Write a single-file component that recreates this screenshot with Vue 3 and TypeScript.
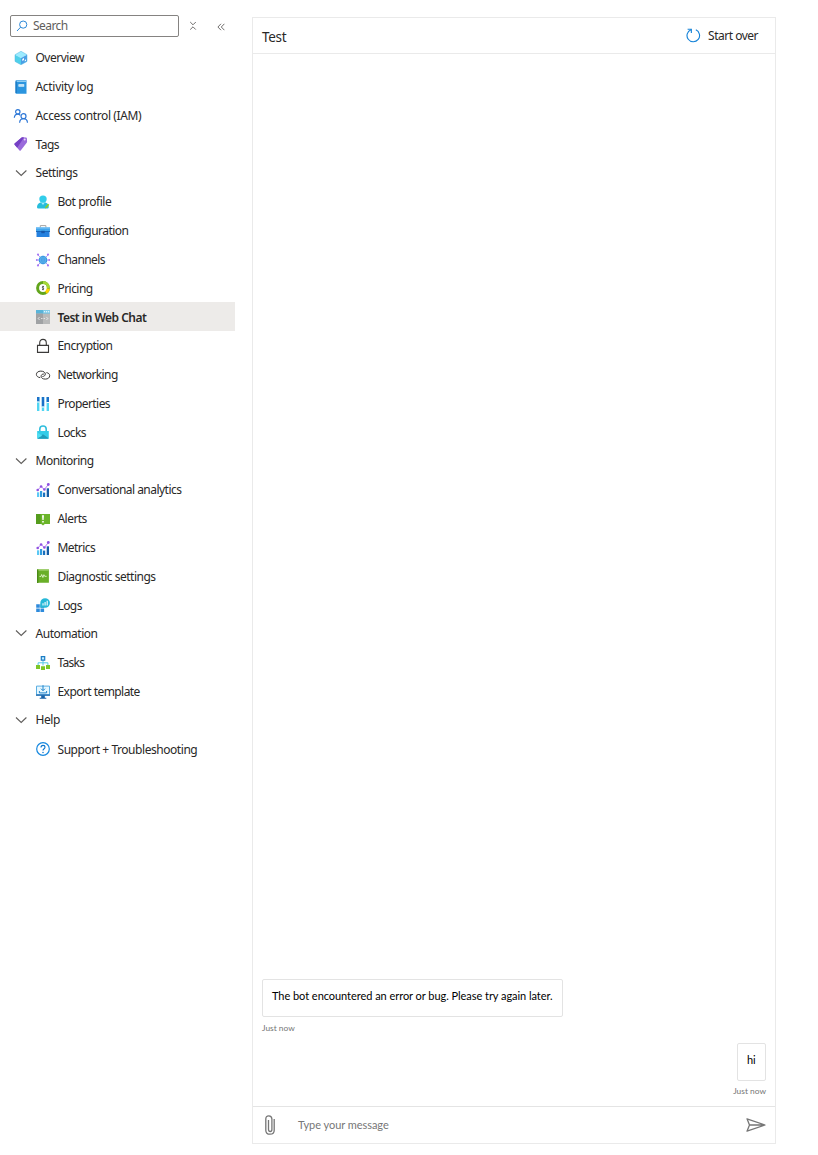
<script setup lang="ts">
interface NavItem {
  label: string
  icon: string
  kind: 'root' | 'group' | 'child'
  active?: boolean
  spacing: number
}

const items: NavItem[] = [
  { label: 'Overview', icon: 'cube', kind: 'root', spacing: -0.5 },
  { label: 'Activity log', icon: 'book', kind: 'root', spacing: -0.3 },
  { label: 'Access control (IAM)', icon: 'people', kind: 'root', spacing: -0.38 },
  { label: 'Tags', icon: 'tag', kind: 'root', spacing: -0.5 },
  { label: 'Settings', icon: 'chevron', kind: 'group', spacing: -0.45 },
  { label: 'Bot profile', icon: 'profile', kind: 'child', spacing: -0.47 },
  { label: 'Configuration', icon: 'toolbox', kind: 'child', spacing: -0.53 },
  { label: 'Channels', icon: 'channels', kind: 'child', spacing: -0.6 },
  { label: 'Pricing', icon: 'pricing', kind: 'child', spacing: -0.55 },
  { label: 'Test in Web Chat', icon: 'webchat', kind: 'child', active: true, spacing: -0.52 },
  { label: 'Encryption', icon: 'padlock', kind: 'child', spacing: -0.55 },
  { label: 'Networking', icon: 'link', kind: 'child', spacing: -0.6 },
  { label: 'Properties', icon: 'properties', kind: 'child', spacing: -0.58 },
  { label: 'Locks', icon: 'lock', kind: 'child', spacing: -0.6 },
  { label: 'Monitoring', icon: 'chevron', kind: 'group', spacing: -0.5 },
  { label: 'Conversational analytics', icon: 'chart', kind: 'child', spacing: -0.53 },
  { label: 'Alerts', icon: 'alert', kind: 'child', spacing: -0.55 },
  { label: 'Metrics', icon: 'chart', kind: 'child', spacing: -0.55 },
  { label: 'Diagnostic settings', icon: 'diagnostic', kind: 'child', spacing: -0.5 },
  { label: 'Logs', icon: 'logs', kind: 'child', spacing: -0.6 },
  { label: 'Automation', icon: 'chevron', kind: 'group', spacing: -0.47 },
  { label: 'Tasks', icon: 'tasks', kind: 'child', spacing: -0.7 },
  { label: 'Export template', icon: 'export', kind: 'child', spacing: -0.56 },
  { label: 'Help', icon: 'chevron', kind: 'group', spacing: -0.4 },
  { label: 'Support + Troubleshooting', icon: 'help', kind: 'child', spacing: -0.45 },
]
</script>

<template>
  <div class="page">
    <aside class="sidebar">
      <div class="tools">
        <div class="search">
          <svg class="search-icon" viewBox="0 0 12 12" fill="none" stroke="#2b88d8">
            <circle cx="7.2" cy="4.6" r="3.6" />
            <path d="M4.6 7.2 1 11" />
          </svg>
          <span>Search</span>
        </div>
        <svg class="collapse" viewBox="0 0 8 10" fill="none" stroke="#605e5c" stroke-width=".9">
          <path d="M1.2 1 4 3.8 6.8 1M1.2 8.6 4 5.8l2.8 2.8" />
        </svg>
        <svg class="fold" viewBox="0 0 8 8" fill="none" stroke="#605e5c" stroke-width=".9">
          <path d="M4 .8.9 4 4 7.2M7.4.8 4.3 4l3.1 3.2" />
        </svg>
      </div>
      <nav>
        <div
          v-for="item in items"
          :key="item.label"
          class="row"
          :class="[item.kind, { active: item.active }]"
        >
          <svg class="icon" viewBox="0 0 14 14" fill="none">
            <g v-if="item.icon === 'cube'">
              <path d="M7 .3 13 3.7 7 7.1 1 3.7z" fill="#9cebff" />
              <path d="M1 3.7 7 7.1v6.7L1 10.4z" fill="#50d0ea" />
              <path d="M13 3.7 7 7.1v6.7l6-3.4z" fill="#4a9fe6" />
              <path d="m7 .3 6 3.4v6.7l-6 3.4-6-3.4V3.7z" stroke="#50b7e0" stroke-width=".5" />
              <path d="m8.3 8.1 1.7-1v2l-1.7 1zM10.8 9l1.2-.7v1.5l-1.2.7z" fill="#fff" />
            </g>
            <g v-else-if="item.icon === 'book'">
              <path d="M1.5 1q0-.8.8-.8h10.2v13.6H2.3q-.8 0-.8-.8z" fill="#2b95df" />
              <path d="M2.6.8h10V2h-10z" fill="#8fcdf2" />
              <path d="M1.5 1.5h1.2V13H1.5z" fill="#1b74bd" />
              <path d="M4.5 4.3h5.7v2.3H4.5z" fill="#fff" />
              <path d="M5 5h4.8v.8H5z" fill="#addcf6" />
            </g>
            <g v-else-if="item.icon === 'people'" stroke="#2e78d7" stroke-width="1.2">
              <circle cx="3.8" cy="2.8" r="2.2" />
              <path d="M.3 8.8c.2-2.2 1.5-3.7 3.5-3.7 1 0 1.8.4 2.5 1.2" />
              <circle cx="9.5" cy="7.2" r="2.5" />
              <path d="M5.6 13.7c.2-2.4 1.7-4 3.9-4s3.8 1.6 4 4" />
            </g>
            <g v-else-if="item.icon === 'tag'">
              <path d="M.6 6.6 7.6.6q.4-.4 1-.4l3.4.3q.8.1.9.8l.2 3.4q0 .6-.4 1l-6 7.8q-.6.6-1.2 0L.6 7.8q-.5-.6 0-1.2z" fill="#9a6bdb" />
              <path d="M.6 6.6 7.6.6q.4-.4 1-.4l1.4.2L3.2 10.8.6 7.8q-.5-.6 0-1.2z" fill="#7540c4" />
              <circle cx="10.7" cy="2.6" r="1" fill="#e6d8fa" />
            </g>
            <path v-else-if="item.icon === 'chevron'" d="m2 4.5 5.2 5 5.2-5" stroke="#605e5c" stroke-width="1.1" />
            <g v-else-if="item.icon === 'profile'">
              <path d="M1 12.2C1.3 9 3 7.3 7 7.3s5.5 1.6 5.8 4.6q0 1.7-1.4 1.7h-9Q1 13.6 1 12.2z" fill="#27bddc" />
              <circle cx="7" cy="4.1" r="3.7" fill="#32cdea" />
              <path d="m5 7.5 2 2.6 2-2.6q-2 .7-4 0z" fill="#a8ecf7" />
              <path d="m9 13.6.6-2.2 2.4-2.6 1.3 1-2.4 2.9z" fill="#8fce20" />
            </g>
            <g v-else-if="item.icon === 'toolbox'">
              <path d="M4.3 3.8V1.6h5.6v2.2" stroke="#a7a5a3" stroke-width="1" />
              <path d="M0 3.4h14V8H0z" fill="#42a6ed" />
              <path d="M.5 7.4h13V13H.5z" fill="#2481df" />
              <path d="M0 3.4h14v1.2H0z" fill="#78c4f5" />
              <path d="M0 7.5h14" stroke="#155db0" stroke-width=".8" />
              <path d="M5.3 6.8h3.4v2.4H5.3z" fill="#1557aa" />
            </g>
            <g v-else-if="item.icon === 'channels'">
              <path d="M2 2 12 12M12 2 2 12M0 7h14" stroke="#a67af4" stroke-width=".8" />
              <circle cx="7" cy="7" r="4.3" fill="#248dde" />
              <path d="M2.8 7h8.4M7 2.8v8.4M3.5 5h7M3.5 9h7M5.4 3.2q-1.5 3.8 0 7.6M8.6 3.2q1.5 3.8 0 7.6" stroke="#a5dcfa" stroke-width=".4" />
              <g fill="#a67af4">
                <circle cx="2" cy="1.6" r="1.1" /><circle cx="12" cy="1.6" r="1.1" />
                <circle cx="2" cy="12.4" r="1.1" /><circle cx="12" cy="12.4" r="1.1" />
                <circle cx=".8" cy="7" r=".9" /><circle cx="13.2" cy="7" r=".9" />
              </g>
            </g>
            <g v-else-if="item.icon === 'pricing'">
              <circle cx="7" cy="7" r="5.4" stroke="#62a51c" stroke-width="3" />
              <path d="M7 1.6A5.4 5.4 0 0 1 12.4 7" stroke="#a4d638" stroke-width="3" />
              <path d="M12.4 7.5a5.4 5.4 0 0 1-2.6 4" stroke="#ffd400" stroke-width="3" />
              <path d="M8 5.6q-1.8-.5-1.8.5C6.2 7 7.9 7 7.9 8q-.1.9-1.9.4M7 4.8v4.4" stroke="#343b35" stroke-width=".7" />
            </g>
            <g v-else-if="item.icon === 'webchat'">
              <path d="M0 0h14v14H0z" fill="#b9baba" />
              <path d="M0 3.4h7V14H0z" fill="#a0a2a4" />
              <path d="M0 0h14v3.4H0z" fill="#59b4d9" />
              <path d="M7 0h7v3.4H7z" fill="#81cbe8" />
              <path d="M8 1.2h1.2v1H8zm2 0h1.2v1H10zm2 0h1.2v1H12z" fill="#fff" />
              <path d="m3.4 7.2-1.2 1.3 1.2 1.3M10.6 7.2l1.2 1.3-1.2 1.3M5.2 8.5h1.2M7.7 8.5h1.2" stroke="#eee" stroke-width="1" />
            </g>
            <g v-else-if="item.icon === 'padlock'" stroke="#3b3a39" stroke-width="1.1">
              <path d="M1.5 6.4h11v7h-11zM3.7 6.3V4q0-3.6 3.3-3.6T10.3 4v2.3" />
            </g>
            <g v-else-if="item.icon === 'link'" stroke="#3b3a39" stroke-width="1">
              <path d="M4.2 9.6C2 9.4.4 8.2.4 6.4c0-1.8 1.7-3.3 4.4-3.3s4.5 1.3 4.5 2.9S8 8.5 6.4 8.5" />
              <path d="M10.4 4.6c2.2.4 3.3 1.5 3.3 3.1 0 2-1.7 3.4-4.4 3.4S5.1 9.9 5.1 8.3c0-1.5 1.1-2.3 2.8-2.3" />
            </g>
            <g v-else-if="item.icon === 'properties'">
              <path d="M1 0h2.4v14H1zm4.8 0h2.4v14H5.8zm4.8 0H13v14h-2.4z" fill="#50d5f2" />
              <path d="M1 0h2.4v4.5H1zm4.8 0h2.4v9.5H5.8zm4.8 0H13v5h-2.4z" fill="#1c70c8" />
              <path d="M1 5h2.4M5.8 10h2.4M10.6 5.5H13" stroke="#fff" />
            </g>
            <g v-else-if="item.icon === 'lock'">
              <path d="M3.8 7V4q0-3 3.2-3t3.2 3v3" stroke="#32bedd" stroke-width="1.6" />
              <path d="M1.2 6h11.6v7q0 .8-.8.8H2q-.8 0-.8-.8z" fill="#34cce8" />
              <path d="m1.4 13.3 5.6-4 5.6 4-.6.5H2z" fill="#209cba" />
              <path d="m1.2 7.3 5 3.5-4.8 2.5z" fill="#50def2" />
            </g>
            <g v-else-if="item.icon === 'chart'">
              <path d="M1 9.3h2.2V14H1z" fill="#5bc8f5" />
              <path d="M4 8h2.2v6H4z" fill="#2f9bdf" />
              <path d="M7 9.6h2.2V14H7z" fill="#1a70bd" />
              <path d="M10.7 5.3H13V14h-2.3z" fill="#155ca5" />
              <path d="m1.7 7 3.4-3.5 3.3 3 4-5" stroke="#b37cf2" stroke-width="1" />
              <g fill="#9052e2">
                <circle cx="1.7" cy="7" r="1.3" /><circle cx="5.1" cy="3.5" r="1.3" />
                <circle cx="8.4" cy="6.5" r="1.3" /><circle cx="12.3" cy="1.5" r="1.4" />
              </g>
            </g>
            <g v-else-if="item.icon === 'alert'">
              <path d="M0 2h14v10H8.8L7 13.6 5.2 12H0z" fill="#6bb52a" />
              <path d="M0 2h4.5v10H0z" fill="#559c1d" />
              <path d="M6 3.2h2l-.4 4.8H6.4zM6.2 9h1.6v1.5H6.2z" fill="#fff" />
            </g>
            <g v-else-if="item.icon === 'diagnostic'">
              <path d="M1 .7Q1 .2 1.5.2h11.4v13.6H1.5q-.5 0-.5-.5z" fill="#69af28" />
              <path d="M1 .5h1.4V14H1z" fill="#4b8b17" />
              <path d="M2.4.5h10.3v1H2.4z" fill="#b5dc87" />
              <path d="M3.5 7.5h1.4l.8-2 1.2 3 1-2.8.8 1.6h2" stroke="#eefadf" stroke-width=".8" />
            </g>
            <g v-else-if="item.icon === 'logs'">
              <path d="M.2 6.3h3.6v3.4H.2zm0 4.1h3.6v3.5H.2zm4.3 0h3.6v3.5H4.5z" fill="#2e8bdc" />
              <path d="M4.5 6.3h3.6v3.4H4.5z" fill="#1768af" />
              <path d="M4.3 9.3V5A4.8 4.8 0 1 1 9.1 9.8H4.8q-.5 0-.5-.5z" fill="#27b8d8" />
              <path d="M7 5.2v2.2M9.1 4v3.4M11.2 2.8v4.6" stroke="#fff" stroke-width="1.1" />
            </g>
            <g v-else-if="item.icon === 'tasks'">
              <path d="M7 4.4v5M2.1 9V6.8h9.8V9" stroke="#54c8e6" stroke-width="1" />
              <path d="M5.3.6h3.4v3.5H5.3z" fill="#c5edff" stroke="#1b7cc4" stroke-width="1.2" />
              <path d="M0 9h4v4H0zm5 1.2h4v3.8H5zM10 9h4v4h-4z" fill="#7dc629" />
            </g>
            <g v-else-if="item.icon === 'export'">
              <path d="M.5 1.1h13v8.7H.5z" fill="#e5f7ff" stroke="#5aaee2" stroke-width="1" />
              <path d="M5.2 10.3h3.6v2.4h1.5v1.1H3.7v-1.1h1.5z" fill="#1761a8" />
              <path d="M0 9.4h14v1.4H0z" fill="#1b69b1" />
              <path d="M7 .2v5.3M5 3.7l2 2 2-2M3.4 6v1.9h7.2V6" stroke="#1f83cb" stroke-width="1" />
            </g>
            <g v-else>
              <circle cx="7" cy="7" r="6.3" stroke="#1688df" stroke-width="1.2" />
              <path d="M5 5.5Q5 3.4 7 3.4t2 1.9C9 6.8 7 6.7 7 8.6" stroke="#0b75cd" stroke-width="1.1" />
              <circle cx="7" cy="10.4" r=".75" fill="#0b75cd" />
            </g>
          </svg>
          <span class="label" :style="{ letterSpacing: item.spacing + 'px' }">{{ item.label }}</span>
        </div>
      </nav>
    </aside>

    <main class="chat">
      <header>
        <h1>Test</h1>
        <button type="button">
          <svg viewBox="0 0 16 16" fill="none" stroke="#1683d8" stroke-width="1.2">
            <path d="M10.5 1.9A6.7 6.7 0 1 1 5.3 1.8" />
            <path d="M1.7 1.3h4v4" />
          </svg>
          <span>Start over</span>
        </button>
      </header>
      <section class="transcript">
        <div class="bubble bot">The bot encountered an error or bug. Please try again later.</div>
        <div class="time">Just now</div>
        <div class="bubble user">hi</div>
        <div class="time user-time">Just now</div>
      </section>
      <footer>
        <svg class="clip" viewBox="0 0 10 20" fill="none" stroke="#767676" stroke-width="1.3">
          <path d="M9.2 4v11.2q0 4-4.2 4t-4.2-4V4Q.8.8 3.8.8T6.9 4v10.5q0 2-1.7 2t-1.7-2V5" />
        </svg>
        <span class="placeholder">Type your message</span>
        <svg class="send" viewBox="0 0 20 14" fill="none" stroke="#767676" stroke-width="1.3" stroke-linejoin="round">
          <path d="m1 .8 18 6.2L1 13.2 3.5 7zM3.5 7H19" />
        </svg>
      </footer>
    </main>
  </div>
</template>

<style>
body {
  background: #fff;
}
</style>

<style scoped>
.page {
  display: flex;
  width: 818px;
  height: 1155px;
  overflow: hidden;
  font-family: "Noto Sans", "Open Sans", sans-serif;
  font-size: 12px;
  color: #292827;
}
.sidebar {
  width: 235px;
  flex: none;
}
.tools {
  height: 28px;
  padding: 15px 0 0 10px;
  display: flex;
  align-items: flex-start;
}
.search {
  box-sizing: border-box;
  width: 169px;
  height: 22px;
  border: 1px solid #858381;
  border-radius: 2px;
  display: flex;
  align-items: center;
  padding: 0 0 1px 5px;
  color: #605e5c;
  letter-spacing: -0.55px;
}
.search-icon {
  width: 12px;
  height: 12px;
  margin-right: 5px;
}
.collapse {
  width: 8px;
  height: 10px;
  margin: 6px 0 0 10px;
}
.fold {
  width: 8px;
  height: 8px;
  margin: 8px 0 0 20px;
}
.row {
  box-sizing: border-box;
  height: 28.8px;
  display: flex;
  align-items: center;
  padding: 1.2px 0 0 14px;
  white-space: nowrap;
}
.row.group {
  padding-top: 0;
}
.row.child {
  padding-left: 36px;
}
.icon {
  width: 14px;
  height: 14px;
  flex: none;
  margin-right: 7.5px;
  overflow: visible;
}
.active {
  background: #edebe9;
  font-weight: 600;
}
.chat {
  box-sizing: border-box;
  width: 524px;
  height: 1127px;
  margin: 17px 0 0 17px;
  border: 1px solid #eaeaea;
  display: flex;
  flex-direction: column;
}
header {
  height: 35px;
  border-bottom: 1px solid #eaeaea;
  display: flex;
  align-items: center;
  justify-content: space-between;
  padding: 0 17px 0 9px;
}
h1 {
  margin: 3px 0 0;
  font-size: 13.5px;
  font-weight: 400;
  letter-spacing: -0.3px;
}
button {
  display: flex;
  align-items: center;
  padding: 0;
  border: 0;
  background: none;
  font: inherit;
  color: inherit;
  letter-spacing: -0.5px;
}
button svg {
  width: 15px;
  height: 15px;
  margin-right: 7px;
}
.transcript {
  flex: 1;
  display: flex;
  flex-direction: column;
  align-items: flex-start;
  justify-content: flex-end;
  padding: 0 9px 9px;
  font-family: Lato, Roboto, sans-serif;
}
.bubble {
  box-sizing: border-box;
  height: 38px;
  border: 1px solid #e3e3e3;
  border-radius: 2px;
  padding: 8px 9px;
  font-size: 11px;
  line-height: 16px;
  letter-spacing: -0.045px;
  color: #000;
  white-space: nowrap;
}
.bot {
  width: 301px;
}
.user {
  width: 29px;
  margin-top: 9px;
  align-self: flex-end;
}
.time {
  height: 11px;
  margin-top: 6px;
  font-size: 8.4px;
  line-height: 11px;
  color: #767676;
}
.user-time {
  margin-top: 5px;
  align-self: flex-end;
}
footer {
  height: 36px;
  border-top: 1px solid #e4e4e4;
  display: flex;
  align-items: center;
  padding: 0 9px 0 12px;
  font-family: Lato, Roboto, sans-serif;
  font-size: 11px;
  letter-spacing: -0.05px;
  color: #767676;
}
.clip {
  width: 10px;
  height: 20px;
}
.placeholder {
  margin: 0 0 1px 23px;
  flex: 1;
}
.send {
  width: 20px;
  height: 14px;
}
</style>
